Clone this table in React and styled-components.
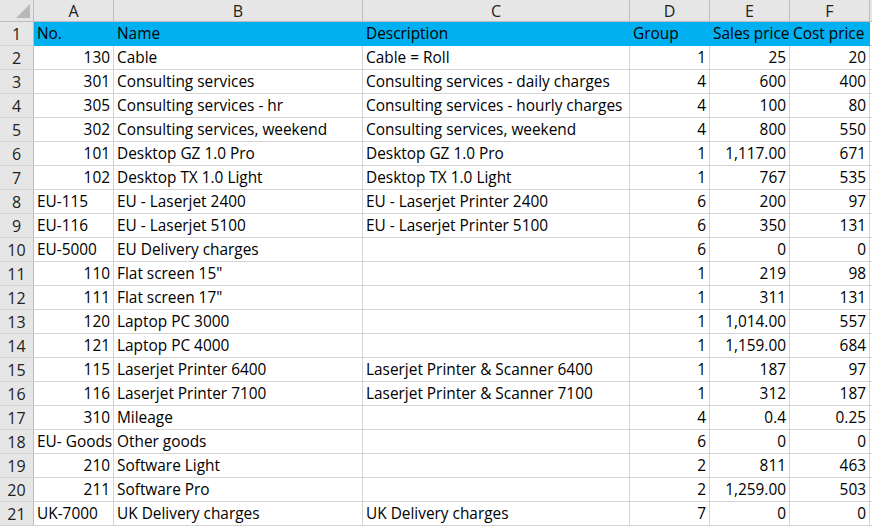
import React from "react";
import styled, { createGlobalStyle } from "styled-components";

const GlobalStyle = createGlobalStyle`
  html, body {
    margin: 0;
    padding: 0;
    background: #ffffff;
  }
  body {
    font-family: "Open Sans", "Liberation Sans", sans-serif;
    overflow: hidden;
  }
`;

const columns = ["A", "B", "C", "D", "E", "F"];

const header = ["No.", "Name", "Description", "Group", "Sales price", "Cost price"];

const rows = [
  ["130", "Cable", "Cable = Roll", "1", "25", "20"],
  ["301", "Consulting services", "Consulting services - daily charges", "4", "600", "400"],
  ["305", "Consulting services - hr", "Consulting services - hourly charges", "4", "100", "80"],
  ["302", "Consulting services, weekend", "Consulting services, weekend", "4", "800", "550"],
  ["101", "Desktop GZ 1.0 Pro", "Desktop GZ 1.0 Pro", "1", "1,117.00", "671"],
  ["102", "Desktop TX 1.0 Light", "Desktop TX 1.0 Light", "1", "767", "535"],
  ["EU-115", "EU - Laserjet 2400", "EU - Laserjet Printer 2400", "6", "200", "97"],
  ["EU-116", "EU - Laserjet 5100", "EU - Laserjet Printer 5100", "6", "350", "131"],
  ["EU-5000", "EU Delivery charges", "", "6", "0", "0"],
  ["110", "Flat screen 15\"", "", "1", "219", "98"],
  ["111", "Flat screen 17\"", "", "1", "311", "131"],
  ["120", "Laptop PC 3000", "", "1", "1,014.00", "557"],
  ["121", "Laptop PC 4000", "", "1", "1,159.00", "684"],
  ["115", "Laserjet Printer 6400", "Laserjet Printer & Scanner 6400", "1", "187", "97"],
  ["116", "Laserjet Printer 7100", "Laserjet Printer & Scanner 7100", "1", "312", "187"],
  ["310", "Mileage", "", "4", "0.4", "0.25"],
  ["EU- Goods", "Other goods", "", "6", "0", "0"],
  ["210", "Software Light", "", "2", "811", "463"],
  ["211", "Software Pro", "", "2", "1,259.00", "503"],
  ["UK-7000", "UK Delivery charges", "UK Delivery charges", "7", "0", "0"],
];

const isNumeric = (v) => /^[\d.,]+$/.test(v);

const Sheet = styled.div`
  display: grid;
  grid-template-columns: 34px 80px 249px 267px 80px 80px 80px 1fr;
  grid-template-rows: 22px;
  grid-auto-rows: 24px;
  width: 872px;
  font-size: 15.4px;
  line-height: 20px;
  color: #000;
`;

const Corner = styled.div`
  position: relative;
  background: #e6e6e6;
  border-right: 1px solid #bdbdbd;
  border-bottom: 1px solid #bdbdbd;
  &::after {
    content: "";
    position: absolute;
    right: 3px;
    bottom: 3px;
    width: 0;
    height: 0;
    border-left: 14px solid transparent;
    border-bottom: 14px solid #b8b8b8;
  }
`;

const ColHead = styled.div`
  background: #e6e6e6;
  border-right: 1px solid #bdbdbd;
  border-bottom: 1px solid #bdbdbd;
  display: flex;
  align-items: center;
  justify-content: center;
  color: #222;
  font-size: 16px;
  box-sizing: border-box;
`;

const RowHead = styled.div`
  background: #e6e6e6;
  border-right: 1px solid #bdbdbd;
  border-bottom: 1px solid #d4d4d4;
  display: flex;
  align-items: flex-end;
  justify-content: center;
  padding-bottom: 1px;
  box-sizing: border-box;
  color: #222;
  font-size: 16px;
`;

const Cell = styled.div`
  background: ${(p) => (p.$head ? "#00b0f0" : "#ffffff")};
  border-right: 1px solid ${(p) => (p.$head ? "#00b0f0" : "#d4d4d4")};
  border-bottom: 1px solid ${(p) => (p.$head ? "#00b0f0" : "#d4d4d4")};
  display: flex;
  align-items: flex-end;
  justify-content: ${(p) => (p.$right ? "flex-end" : "flex-start")};
  padding: 0 3px 1px 3px;
  box-sizing: border-box;
  white-space: nowrap;
  min-width: 0;
`;

const Filler = styled.div`
  background: ${(p) => (p.$grey ? "#e6e6e6" : "#ffffff")};
  border-bottom: 1px solid ${(p) => (p.$grey ? "#bdbdbd" : "#d4d4d4")};
`;

export default function App() {
  return (
    <>
      <GlobalStyle />
      <Sheet>
        <Corner />
        {columns.map((c) => (
          <ColHead key={c}>{c}</ColHead>
        ))}
        <Filler $grey />

        <RowHead>1</RowHead>
        {header.map((h) => (
          <Cell key={h} $head>
            {h}
          </Cell>
        ))}
        <Filler />

        {rows.map((r, ri) => (
          <React.Fragment key={ri}>
            <RowHead>{ri + 2}</RowHead>
            {r.map((v, ci) => (
              <Cell key={ci} $right={isNumeric(v)}>
                {v}
              </Cell>
            ))}
            <Filler />
          </React.Fragment>
        ))}
      </Sheet>
    </>
  );
}
